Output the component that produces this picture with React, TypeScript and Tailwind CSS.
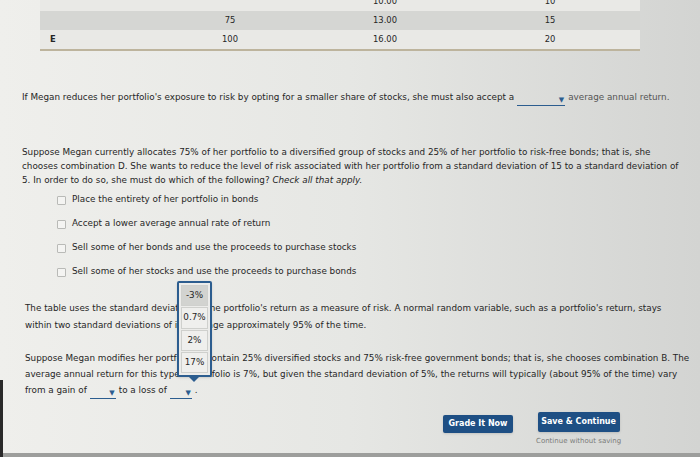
import React from "react";

const rows = [
  { label: "", a: "", b: "10.00", c: "10", shade: false },
  { label: "", a: "75", b: "13.00", c: "15", shade: true },
  { label: "E", a: "100", b: "16.00", c: "20", shade: false },
];

const options = [
  "Place the entirety of her portfolio in bonds",
  "Accept a lower average annual rate of return",
  "Sell some of her bonds and use the proceeds to purchase stocks",
  "Sell some of her stocks and use the proceeds to purchase bonds",
];

function Blank({ w }: { w: string }) {
  return (
    <span className={`inline-flex ${w} h-[11px] items-end justify-end border-b border-[#2c5d8f] align-[-2px] mx-[3px]`}>
      <span className="text-[7px] leading-[9px] text-[#2c5d8f] mr-[1px]">▼</span>
    </span>
  );
}

export default function App() {
  return (
    <div
      className="relative w-[700px] h-[457px] overflow-hidden flex flex-col bg-linear-to-r from-[#efefec] via-[#e6e7e4] to-[#d3d4d2] text-[#262626] text-[8.8px]"
      style={{ fontFamily: '"DejaVu Sans", Verdana, sans-serif' }}
    >
      {/* score table, top cut off */}
      <div className="ml-[40px] w-[600px] -mt-[8px] border-b-2 border-[#bdb49d] text-[8.4px]">
        {rows.map((r, i) => (
          <div
            key={i}
            className={`grid grid-cols-[150px_80px_230px_100px_40px] h-[19px] items-center ${r.shade ? "bg-[#d5d6d3]" : "bg-[#e9e9e6]"}`}
          >
            <span className="pl-[10px] font-bold">{r.label}</span>
            <span className="text-center">{r.a}</span>
            <span className="text-center">{r.b}</span>
            <span className="text-center">{r.c}</span>
            <span />
          </div>
        ))}
      </div>

      <p className="mt-[40px] ml-[22px] leading-[12px] whitespace-nowrap">
        If Megan reduces her portfolio's exposure to risk by opting for a smaller share of stocks, she must also accept a
        <Blank w="w-[48px]" />
        <span className="text-[#555]">average annual return.</span>
      </p>

      <p className="mt-[39px] ml-[22px] leading-[14px] whitespace-nowrap">
        Suppose Megan currently allocates 75% of her portfolio to a diversified group of stocks and 25% of her portfolio to risk-free bonds; that is, she
        <br />
        chooses combination D. She wants to reduce the level of risk associated with her portfolio from a standard deviation of 15 to a standard deviation of
        <br />
        5. In order to do so, she must do which of the following? <i>Check all that apply.</i>
      </p>

      <ul className="mt-[1px] ml-[57px]">
        {options.map((o) => (
          <li key={o} className="flex items-center h-[24px] gap-[6px]">
            <span className="w-[9px] h-[9px] border border-[#b9bab7] bg-[#f4f4f2] rounded-[1px]" />
            <span>{o}</span>
          </li>
        ))}
      </ul>

      <p className="mt-[16px] ml-[25px] leading-[17px] whitespace-nowrap">
        The table uses the standard deviation of the portfolio's return as a measure of risk. A normal random variable, such as a portfolio's return, stays
        <br />
        within two standard deviations of its average approximately 95% of the time.
      </p>

      <p className="mt-[16px] ml-[25px] leading-[16px] whitespace-nowrap">
        Suppose Megan modifies her portfolio to contain 25% diversified stocks and 75% risk-free government bonds; that is, she chooses combination B. The
        <br />
        average annual return for this type of portfolio is 7%, but given the standard deviation of 5%, the returns will typically (about 95% of the time) vary
        <br />
        from a gain of
        <Blank w="w-[26px]" />
        to a loss of
        <Blank w="w-[22px]" />.
      </p>

      <div className="mt-[13px] ml-[443px] flex items-start gap-[23px] text-[8px]">
        <button className="mt-[3px] w-[70px] h-[18px] bg-[#1e4f84] text-white font-bold rounded-[2px] shadow-sm">
          Grade It Now
        </button>
        <div className="flex flex-col items-center">
          <button className="w-[82px] h-[20px] bg-[#1e4f84] text-white font-bold rounded-[2px] shadow-sm">
            Save &amp; Continue
          </button>
          <span className="mt-[4px] text-[7px] text-[#7a7b79]">Continue without saving</span>
        </div>
      </div>

      <div className="flex-1" />
      <div className="h-[4px] bg-[#9d9e9c]" />

      {/* open dropdown for "to a loss of" */}
      <div className="absolute left-[177px] top-[281px] w-[35px] h-[96px] border-2 border-[#2c5d8f] rounded-[2px] bg-[#ececea] flex flex-col p-[2px] gap-[1px] shadow">
        {["-3%", "0.7%", "2%", "17%"].map((v, i) => (
          <div
            key={v}
            className={`flex-1 flex items-center justify-center border border-[#cfd0cd] ${i === 0 ? "bg-[#d2d3d0]" : "bg-[#efefed]"}`}
          >
            {v}
          </div>
        ))}
      </div>
      <div className="absolute left-[188px] top-[376px] w-0 h-0 border-l-[6px] border-r-[6px] border-t-[6px] border-l-transparent border-r-transparent border-t-[#2c5d8f]" />
      <div className="absolute left-0 top-[380px] w-[3px] h-[77px] bg-[#2a2a2a]" />
    </div>
  );
}
